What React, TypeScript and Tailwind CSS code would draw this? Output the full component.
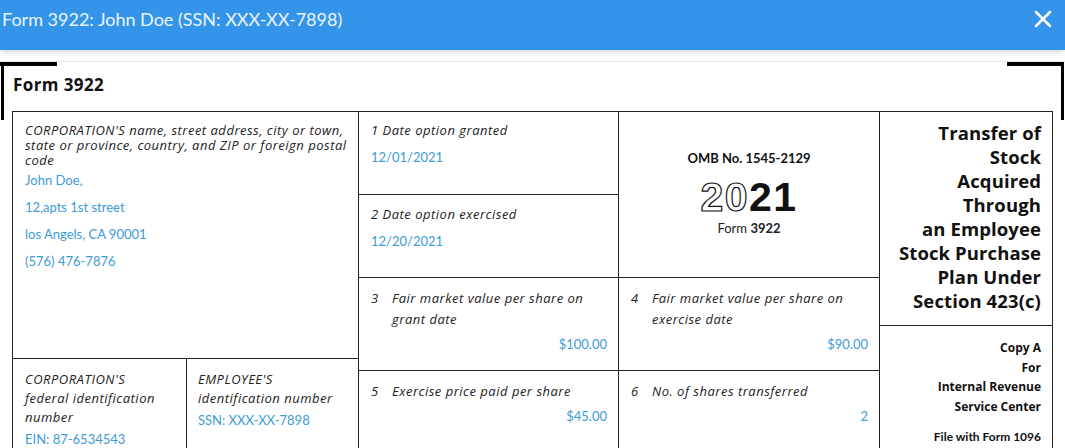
import React from 'react';
import { X } from 'lucide-react';

const lato = "font-['Lato','Noto_Sans',sans-serif]";
const open = "font-['Open_Sans','Noto_Sans',sans-serif]";

function Label({ children, className = '' }: { children: React.ReactNode; className?: string }) {
  return <div className={`${open} italic text-[13px] tracking-[0.5px] text-[#222] ${className}`}>{children}</div>;
}

function Value({ children, className = '' }: { children: React.ReactNode; className?: string }) {
  return <div className={`${lato} text-[13px] text-[#3d9bd6] ${className}`}>{children}</div>;
}

function NumberedCell({ num, label, value, className = '' }: { num: string; label: string; value: string; className?: string }) {
  return (
    <div className={`border-r border-b border-[#222] pl-[12px] pr-[11px] pt-[10px] ${className}`}>
      <div className={`${open} flex italic text-[13px] tracking-[0.5px] text-[#222] leading-[21px]`}>
        <span className="w-[21px] shrink-0">{num}</span>
        <span>{label}</span>
      </div>
      <Value className="text-right leading-[21px] mt-[4px]">{value}</Value>
    </div>
  );
}

export default function App() {
  return (
    <div className={`${lato} w-[1065px] h-[448px] overflow-hidden bg-white`}>
      {/* Header */}
      <div className="h-[50px] bg-[#3394ea] shadow-md flex items-center justify-between pl-[2px] pr-[8px] pb-[12px] relative z-10">
        <span className="text-[18px] text-white/90">Form 3922: John Doe (SSN: XXX-XX-7898)</span>
        <X size={28} strokeWidth={2.2} className="text-white" />
      </div>

      <div className="mt-[11px] border-t border-[#e4e4e4] relative">
        {/* corner brackets */}
        <div className="absolute left-0 top-0 w-[57px] h-[4px] bg-black" />
        <div className="absolute left-[1px] top-0 w-[3px] h-[58px] bg-black" />
        <div className="absolute right-[1px] top-0 w-[57px] h-[4px] bg-black" />
        <div className="absolute right-[1px] top-0 w-[3px] h-[58px] bg-black" />

        <div className="pl-[13px] pt-[11px] h-[49px]">
          <h1 className={`${open} text-[17px] tracking-[0.4px] font-bold text-[#111] leading-[24px]`}>Form 3922</h1>
        </div>

        {/* Form grid */}
        <div className="ml-[12px] w-[1041px] flex border-t border-l border-[#222]">
          {/* Column 1 */}
          <div className="w-[346px] flex flex-col">
            <div className="h-[247px] border-r border-b border-[#222] pl-[12px] pr-[8px] pt-[11px]">
              <Label className="leading-[15px]">
                CORPORATION'S name, street address, city or town, state or province, country, and ZIP or foreign postal code
              </Label>
              <div className="mt-[-1px]">
                <Value className="leading-[27px]">John Doe,</Value>
                <Value className="leading-[27px]">12,apts 1st street</Value>
                <Value className="leading-[27px]">los Angels, CA 90001</Value>
                <Value className="leading-[27px]">(576) 476-7876</Value>
              </div>
            </div>
            <div className="flex">
              <div className="w-[174px] h-[100px] border-r border-b border-[#222] pl-[12px] pt-[11px]">
                <Label className="leading-[19px]">CORPORATION'S<br />federal identification<br />number</Label>
                <Value className="leading-[22px] mt-[1px]">EIN: 87-6534543</Value>
              </div>
              <div className="w-[172px] h-[100px] border-r border-b border-[#222] pl-[11px] pt-[11px]">
                <Label className="leading-[19px]">EMPLOYEE'S<br />identification number</Label>
                <Value className="leading-[22px] mt-[1px]">SSN: XXX-XX-7898</Value>
              </div>
            </div>
          </div>

          {/* Column 2 */}
          <div className="w-[260px] flex flex-col">
            <div className="h-[83px] border-r border-b border-[#222] pl-[12px] pt-[9px]">
              <Label className="leading-[19px]">1 Date option granted</Label>
              <Value className="leading-[27px] mt-[4px]">12/01/2021</Value>
            </div>
            <div className="h-[83px] border-r border-b border-[#222] pl-[12px] pt-[10px]">
              <Label className="leading-[19px]">2 Date option exercised</Label>
              <Value className="leading-[27px] mt-[4px]">12/20/2021</Value>
            </div>
            <NumberedCell className="h-[93px]" num="3" label="Fair market value per share on grant date" value="$100.00" />
            <NumberedCell className="h-[100px]" num="5" label="Exercise price paid per share" value="$45.00" />
          </div>

          {/* Column 3 */}
          <div className="w-[261px] flex flex-col">
            <div className="h-[166px] border-r border-b border-[#222] flex flex-col items-center pt-[37px]">
              <div className="text-[13px] font-bold text-[#111] leading-[18px]">OMB No. 1545-2129</div>
              <div className="font-['Liberation_Sans',Arial,sans-serif] font-bold text-[41px] leading-[44px] tracking-[1.5px] mt-[8px]">
                <span className="text-transparent [-webkit-text-stroke:1.2px_#111]">20</span>
                <span className="text-[#111]">21</span>
              </div>
              <div className="text-[13px] text-[#222] leading-[16px] mt-[1px]">
                Form <span className="font-bold">3922</span>
              </div>
            </div>
            <NumberedCell className="h-[93px]" num="4" label="Fair market value per share on exercise date" value="$90.00" />
            <NumberedCell className="h-[100px]" num="6" label="No. of shares transferred" value="2" />
          </div>

          {/* Column 4 */}
          <div className="w-[173px] flex flex-col">
            <div className="h-[214px] border-r border-b border-[#222] pr-[11px] pt-[9px] text-right">
              <div className={`${open} text-[18.5px] font-bold text-[#111] leading-[24px] tracking-[0.1px]`}>
                Transfer of<br />Stock<br />Acquired<br />Through<br />an Employee<br />Stock Purchase<br />Plan Under<br />Section 423(c)
              </div>
            </div>
            <div className={`${open} h-[140px] border-r border-b border-[#222] pr-[11px] pt-[12px] text-right text-[12px] font-bold text-[#111]`}>
              <div className="leading-[19.5px]">Copy A</div>
              <div className="leading-[19.5px]">For</div>
              <div className="leading-[19.5px]">Internal Revenue</div>
              <div className="leading-[19.5px]">Service Center</div>
              <div className={`${lato} text-[12px] leading-[19.5px] mt-[11px]`}>File with Form 1096</div>
            </div>
          </div>
        </div>
      </div>
    </div>
  );
}
